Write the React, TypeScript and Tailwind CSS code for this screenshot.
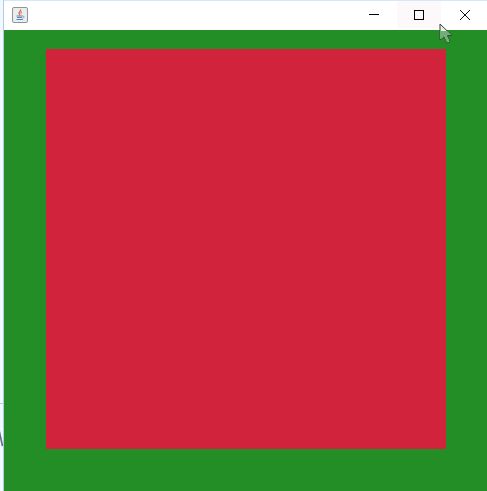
function JavaIcon() {
  return (
    <div className="flex h-[16px] w-[16px] items-center justify-center rounded-[2px] border border-[#8f9499] bg-[#e9edf1]">
      <svg width="12" height="12" viewBox="0 0 12 12" fill="none">
        <path d="M6.5 0.5C7.5 2 4.5 3 5 4.5C5.3 5.4 6 5.8 6 6.5" stroke="#e2622b" strokeWidth="1.2" />
        <path d="M8 2.5C6.8 3.2 6.6 4 7.2 5" stroke="#e2622b" strokeWidth="1" />
        <path d="M2.5 7H8.5M3 8.5H8M2.5 10.5H9" stroke="#5c83b5" strokeWidth="1" />
        <path d="M8.5 7C10.5 6.8 10.5 8.8 8.5 9" stroke="#5c83b5" strokeWidth="0.7" />
      </svg>
    </div>
  );
}

function Cursor() {
  return (
    <svg className="absolute left-[439px] top-[23px]" width="15" height="22" viewBox="0 0 15 22">
      <path d="M1 1V17L5 13.5L8 20L11 18.5L8.2 12.5H13Z" fill="#e4f0e4" stroke="#2f4a33" strokeWidth="1" />
      <path d="M2 8V16L5 13L8 19L10.5 18L7.5 12H11.5L8 8Z" fill="#6fae74" />
    </svg>
  );
}

export default function App() {
  return (
    <div className="relative flex h-[491px] w-[487px] overflow-hidden bg-white">
      {/* desktop peeking out behind the window */}
      <div className="flex w-[3px] flex-col bg-[#f4f7fb]">
        <div className="h-[404px] border-b border-[#bcc8d6]" />
        <svg className="mt-[24px]" width="3" height="20" viewBox="0 0 3 20" fill="none">
          <path d="M-1 2L2.5 18" stroke="#5d6b7a" strokeWidth="1.6" />
        </svg>
      </div>
      <div className="flex min-w-0 flex-1 flex-col border-l border-[#a9cdee]">
        <div className="flex h-[30px] shrink-0 items-center justify-between border-t border-[#d5e8fa] bg-white pb-[2px] pl-[8px]">
          <JavaIcon />
          <div className="flex h-full items-center">
            <div className="flex h-full w-[46px] items-center justify-center">
              <div className="h-px w-[10px] bg-black" />
            </div>
            <div className="flex h-full w-[44px] items-center justify-center bg-[#fdf8fa]">
              <div className="h-[10px] w-[10px] border border-black" />
            </div>
            <div className="flex h-full w-[46px] items-center justify-center pl-[2px]">
              <svg width="12" height="12" viewBox="0 0 12 12" fill="none">
                <path d="M1 1L11 11M11 1L1 11" stroke="#111" strokeWidth="1" />
              </svg>
            </div>
          </div>
        </div>
        <div className="flex flex-1 items-start bg-[#228e25] pl-[42px] pt-[19px]">
          <div className="h-[400px] w-[400px] bg-[#d1233b]" />
        </div>
      </div>
      <Cursor />
    </div>
  );
}
